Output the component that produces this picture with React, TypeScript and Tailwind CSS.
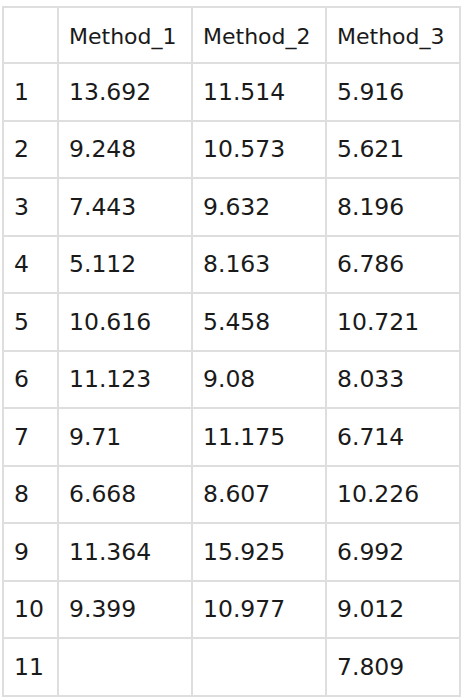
const headers = ["", "Method_1", "Method_2", "Method_3"];

const rows: string[][] = [
  ["1", "13.692", "11.514", "5.916"],
  ["2", "9.248", "10.573", "5.621"],
  ["3", "7.443", "9.632", "8.196"],
  ["4", "5.112", "8.163", "6.786"],
  ["5", "10.616", "5.458", "10.721"],
  ["6", "11.123", "9.08", "8.033"],
  ["7", "9.71", "11.175", "6.714"],
  ["8", "6.668", "8.607", "10.226"],
  ["9", "11.364", "15.925", "6.992"],
  ["10", "9.399", "10.977", "9.012"],
  ["11", "", "", "7.809"],
];

export default function App() {
  return (
    <div
      className="w-[472px] h-[700px] bg-white pt-[6px] pl-[2px] text-[#1a1a1a]"
      style={{ fontFamily: '"DejaVu Sans", Verdana, sans-serif' }}
    >
      <div className="grid w-fit grid-cols-[53px_132px_132px_132px] gap-[2px] bg-[#dedede] p-[2px]">
        {headers.map((h, i) => (
          <div key={i} className="flex h-[54px] items-center bg-white pl-[10px] pt-[2px] text-[22px]">
            {h}
          </div>
        ))}
        {rows.map((r, ri) =>
          r.map((c, ci) => (
            <div
              key={ri + "-" + ci}
              className="flex h-[55.5px] items-center bg-white pl-[10px] pt-[1px] text-[23.5px]"
            >
              {c}
            </div>
          ))
        )}
      </div>
    </div>
  );
}
